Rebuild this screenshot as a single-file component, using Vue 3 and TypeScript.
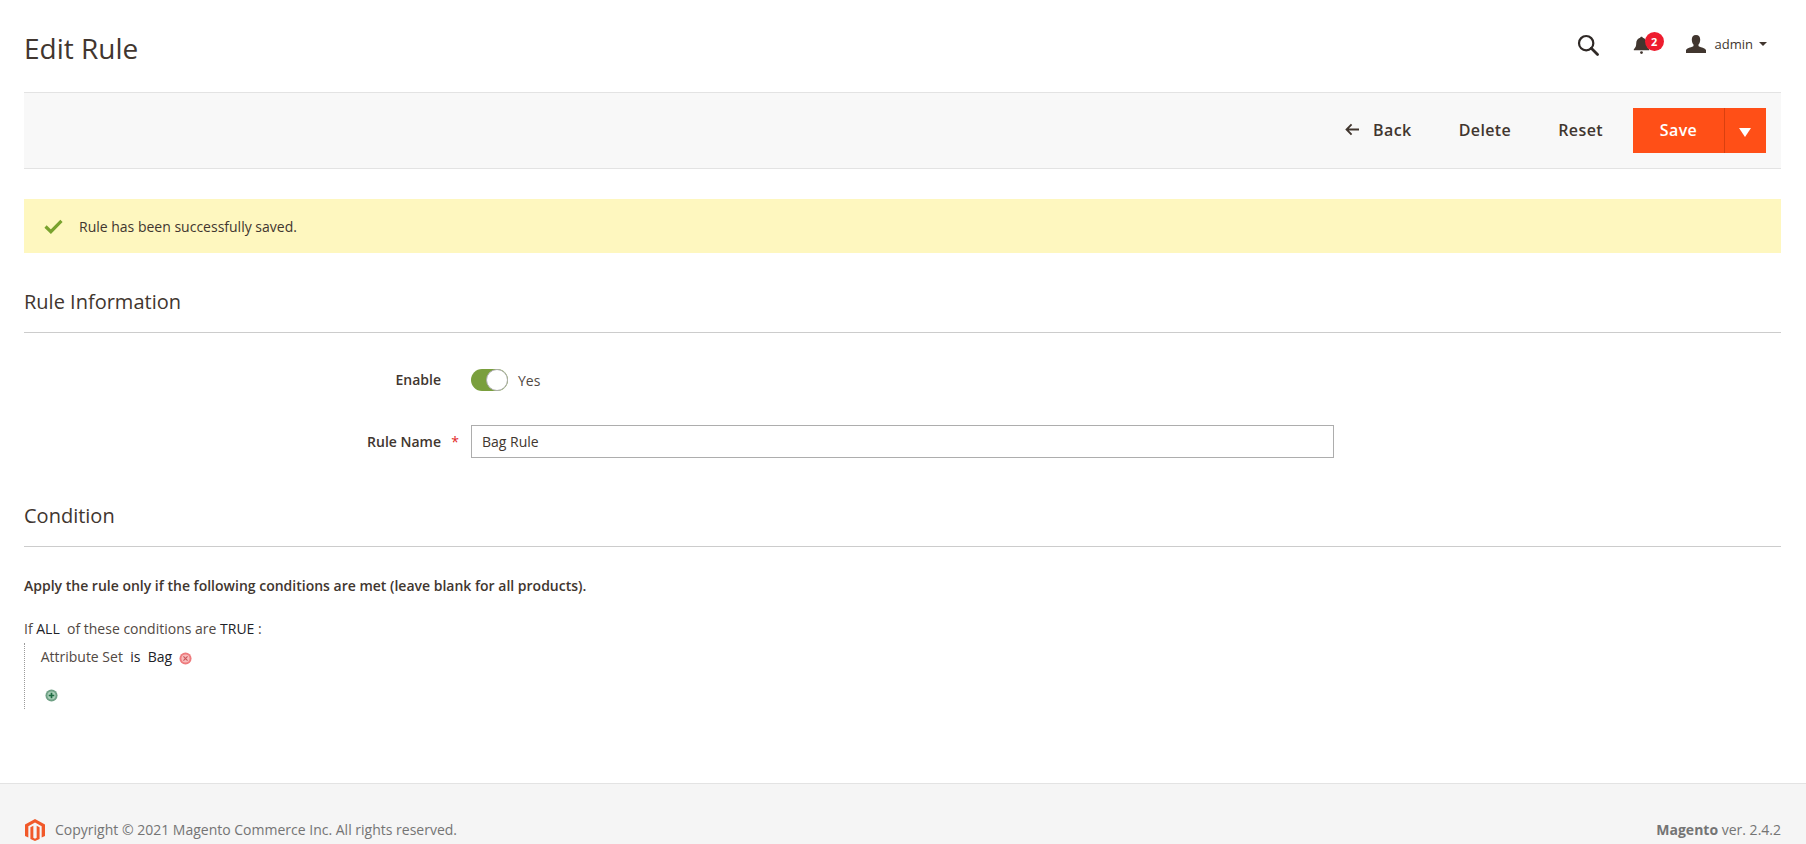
<script setup lang="ts">
const pageTitle: string = 'Edit Rule'
</script>

<template>
  <div class="page">
    <main class="main">
      <header class="top">
        <h1 class="title">{{ pageTitle }}</h1>
        <div class="actions">
          <svg class="search" viewBox="0 0 24 24" width="22" height="22" aria-label="Search">
            <circle cx="10" cy="10" r="7.800" fill="none" stroke="#2f2926" stroke-width="2.400" />
            <path d="M15.600 15.600 22.400 22.400" stroke="#2f2926" stroke-width="3" stroke-linecap="round" />
          </svg>
          <div class="notify">
            <svg class="bell" viewBox="0 0 20 22" width="17" height="18" aria-label="Notifications">
              <path d="M10 0.800c-.9 0-1.500.6-1.600 1.400C5.400 3 3.600 5.400 3.600 8.600c0 3.800-.9 5.600-3 7.600v1.200h18.800v-1.200c-2.100-2-3-3.800-3-7.600 0-3.200-1.800-5.600-4.800-6.400C11.500 1.400 10.900.8 10 .8z" fill="#41362f" />
              <circle cx="10" cy="20.200" r="1.700" fill="#41362f" />
            </svg>
            <span class="badge">2</span>
          </div>
          <div class="user">
            <svg class="avatar" viewBox="0 0 20 18" width="20" height="18" aria-label="User">
              <path d="M10 0C7.100 0 5.800 1.800 5.800 4.500c0 2.100.7 4 1.700 5.100v1.500c-.9 1.200-6.300 1.500-7.500 4V18h20v-2.900c-1.200-2.500-6.600-2.800-7.500-4V9.600c1-1.100 1.700-3 1.700-5.100C14.200 1.800 12.900 0 10 0z" fill="#41362f" />
            </svg>
            <span class="user-name">admin</span>
            <span class="caret-small"></span>
          </div>
        </div>
      </header>

      <div class="toolbar">
        <button class="tool tool-back" type="button">
          <svg viewBox="0 0 16 14" width="15" height="13" aria-hidden="true">
            <path d="M15 7H2M7 1.500 1.600 7 7 12.500" fill="none" stroke="#41362f" stroke-width="2" />
          </svg>
          <span>Back</span>
        </button>
        <button class="tool" type="button">Delete</button>
        <button class="tool" type="button">Reset</button>
        <div class="save">
          <button class="save-main" type="button">Save</button>
          <button class="save-more" type="button" aria-label="More"><span class="caret-white"></span></button>
        </div>
      </div>

      <div class="message">
        <svg viewBox="0 0 20 16" width="19" height="15" aria-hidden="true">
          <path d="M1.500 8 7.200 13.500 18.500 2" fill="none" stroke="#79a22e" stroke-width="3.400" />
        </svg>
        <span>Rule has been successfully saved.</span>
      </div>

      <h2 class="section section-first">Rule Information</h2>

      <div class="field field-enable">
        <label class="label">Enable</label>
        <div class="control control-toggle">
          <span class="toggle"><span class="knob"></span></span>
          <span class="yes">Yes</span>
        </div>
      </div>

      <div class="field field-name">
        <label class="label">Rule Name<span class="star">*</span></label>
        <div class="control">
          <input class="input" type="text" value="Bag Rule" />
        </div>
      </div>

      <h2 class="section section-second">Condition</h2>

      <p class="apply">Apply the rule only if the following conditions are met (leave blank for all products).</p>

      <div class="rule-head">If <b>ALL</b>&nbsp; of these conditions are <b>TRUE</b> :</div>
      <div class="rule-tree">
        <div class="rule-line">
          Attribute Set&nbsp; <b>is</b>&nbsp; <b>Bag</b>
          <svg class="rule-icon" viewBox="0 0 14 14" width="13" height="13" aria-label="Remove">
            <circle cx="7" cy="7" r="6.500" fill="#ee7b7e" />
            <circle cx="7" cy="7" r="4.400" fill="#f8bcbc" />
            <path d="M4.800 4.800 9.200 9.200M9.200 4.800 4.800 9.200" stroke="#c9555a" stroke-width="1.200" />
          </svg>
        </div>
        <div class="rule-add">
          <svg viewBox="0 0 14 14" width="13" height="13" aria-label="Add">
            <circle cx="7" cy="7" r="6.500" fill="#6fa085" />
            <circle cx="7" cy="7" r="4.400" fill="#a9cfb8" />
            <path d="M7 4v6M4 7h6" stroke="#1f6b42" stroke-width="1.800" />
          </svg>
        </div>
      </div>
    </main>

    <footer class="footer">
      <div class="copy">
        <svg viewBox="0 0 24 28" width="20" height="22" preserveAspectRatio="none" aria-label="Magento">
          <path d="M12 0 0 7v14.500l4 2.200V9.300L12 4.600l8 4.700v14.400l4-2.200V7z" fill="#f1592a" />
          <path d="M14 24 12 25.200 10 24V8.600L6.500 10.600V25.600L12 28l5.500-2.400V10.600L14 8.600z" fill="#f1592a" />
        </svg>
        <span>Copyright © 2021 Magento Commerce Inc. All rights reserved.</span>
      </div>
      <div class="version"><b>Magento</b> ver. 2.4.2</div>
    </footer>
  </div>
</template>

<style>
html, body { margin: 0; height: 100%; overflow: hidden; background: #fff; }
</style>

<style scoped>
.page {
  height: 844px;
  overflow: hidden;
  display: flex;
  flex-direction: column;
  font-family: "Open Sans", sans-serif;
  font-size: 14px;
  color: #41362f;
}
.main { flex: 1; padding: 0 25px 0 24px; }
.top {
  height: 92px;
  display: flex;
  justify-content: space-between;
  align-items: flex-start;
  box-sizing: border-box;
}
.title { margin: 26px 0 0; font-size: 28px; line-height: 44px; font-weight: 400; }
.actions { display: flex; align-items: center; margin: 33px 14px 0 0; height: 24px; }
.search { margin-right: 34px; }
.notify { position: relative; width: 30px; height: 24px; margin-right: 23px; display: flex; align-items: flex-end; }
.bell { margin-bottom: 3px; }
.badge {
  position: absolute;
  left: 12px;
  top: -1px;
  width: 19px;
  height: 19px;
  border-radius: 50%;
  background: #ee1c2e;
  color: #fff;
  font-size: 11px;
  font-weight: 700;
  line-height: 19px;
  text-align: center;
}
.user { display: flex; align-items: center; margin-top: -3px; }
.user-name { margin-left: 9px; font-size: 13px; }
.caret-small {
  margin-left: 6px;
  width: 0;
  height: 0;
  border-left: 4px solid transparent;
  border-right: 4px solid transparent;
  border-top: 4.500px solid #41362f;
}
.toolbar {
  height: 77px;
  box-sizing: border-box;
  background: #f8f8f8;
  border-top: 1px solid #e3e3e3;
  border-bottom: 1px solid #e3e3e3;
  display: flex;
  align-items: center;
  justify-content: flex-end;
  padding-right: 15px;
}
.tool {
  border: 0;
  background: none;
  padding: 0 0 2px;
  font: 600 16px "Open Sans", sans-serif;
  letter-spacing: 0.4px;
  color: #41362f;
  display: flex;
  align-items: center;
}
.tool:nth-of-type(1) { margin-right: 47px; }
.tool:nth-of-type(2) { margin-right: 47px; }
.tool:nth-of-type(3) { margin-right: 30px; }
.tool-back svg { margin-right: 13px; }
.save { display: flex; height: 45px; width: 133px; background: #ff4f17; }
.save-main {
  width: 92px;
  border: 0;
  border-right: 1px solid #d9400f;
  background: none;
  color: #fff;
  font: 600 16px "Open Sans", sans-serif;
  letter-spacing: 0.4px;
  padding: 0 0 2px;
}
.save-more { flex: 1; border: 0; background: none; display: flex; align-items: center; justify-content: center; padding: 0 1px 0 0; }
.caret-white {
  width: 0;
  height: 0;
  border-left: 6px solid transparent;
  border-right: 6px solid transparent;
  border-top: 9px solid #fff;
  margin-top: 4px;
}
.message {
  margin-top: 30px;
  height: 54px;
  background: #fef7bf;
  display: flex;
  align-items: center;
  padding-left: 20px;
}
.message span { margin-left: 16px; }
.section { margin: 0; font-weight: 400; font-size: 20px; line-height: 24px; border-bottom: 1px solid #cccccc; }
.section-first { margin-top: 37px; padding-bottom: 18px; }
.section-second { margin-top: 46px; padding-bottom: 18px; }
.field { display: flex; }
.label { width: 417px; text-align: right; font-weight: 600; line-height: 20px; box-sizing: border-box; position: relative; margin-right: 30px; }
.star { position: absolute; right: -18px; top: 0; color: #e22626; font-weight: 400; }
.field-enable { margin-top: 36px; align-items: center; height: 22px; }
.field-name { margin-top: 34px; align-items: center; }
.control-toggle { display: flex; align-items: center; }
.toggle {
  width: 37px;
  height: 22px;
  border-radius: 11px;
  background: #7a9f3d;
  position: relative;
  display: block;
}
.knob {
  position: absolute;
  right: 0;
  top: 0;
  width: 22px;
  height: 22px;
  box-sizing: border-box;
  border-radius: 50%;
  background: #fff;
  border: 1px solid #adadad;
}
.yes { margin-left: 10px; color: #514943; }
.input {
  display: block;
  width: 863px;
  height: 33px;
  box-sizing: border-box;
  border: 1px solid #adadad;
  padding: 0 10px;
  font: 14px "Open Sans", sans-serif;
  color: #41362f;
  background: #fff;
  outline: none;
}
.apply { margin: 29px 0 0; font-weight: 600; line-height: 20px; font-size: 14px; }
.rule-head { margin-top: 23px; line-height: 20px; color: #514943; }
b { font-weight: 400; color: #1d2228; }
.version b { font-weight: 700; color: inherit; }
.rule-tree {
  border-left: 1px dotted #9a9a9a;
  margin-top: 4px;
  padding-left: 12px;
  height: 66px;
  color: #514943;
}
.rule-line { line-height: 20px; padding-top: 4px; display: flex; align-items: center; white-space: pre-wrap; }
.rule-icon { margin-left: 7px; margin-top: 2px; }
.rule-add { margin-top: 22px; padding-left: 8px; height: 13px; line-height: 13px; }
.rule-add svg { display: block; }
.footer {
  height: 61px;
  flex: none;
  box-sizing: border-box;
  background: #f5f5f5;
  border-top: 1px solid #e3e3e3;
  display: flex;
  justify-content: space-between;
  padding: 34px 25px 0 24px;
  color: #747474;
}
.copy { display: flex; align-items: flex-start; }
.copy svg { flex: none; margin: 1px 0 0 1px; }
.copy span { margin-left: 10px; line-height: 24px; }
.version { line-height: 24px; }
</style>
